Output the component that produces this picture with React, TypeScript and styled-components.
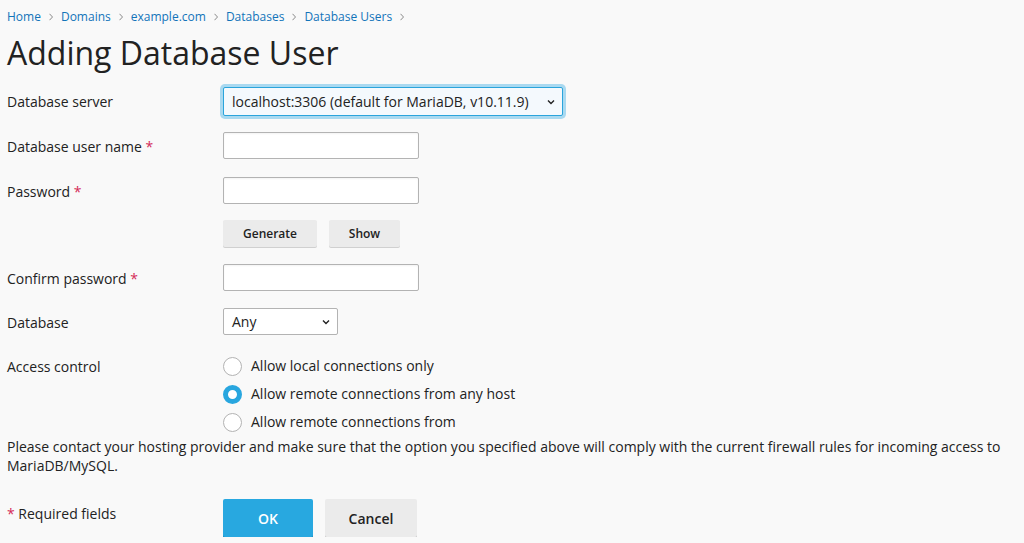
import { Fragment } from "react"
import styled, { createGlobalStyle } from "styled-components"

const GlobalStyle = createGlobalStyle`
  html, body {
    margin: 0;
    padding: 0;
    background: #f9f9f9;
    font-family: "Open Sans", "Liberation Sans", sans-serif;
    color: #222;
  }
  * { box-sizing: border-box; }
`

const Page = styled.div`
  padding: 7px 7px 0;
`

const Crumbs = styled.nav`
  display: flex;
  align-items: center;
  gap: 8px;
  font-size: 12px;
  line-height: 20px;
`

const Crumb = styled.a`
  color: #1274b9;
  text-decoration: none;
`

const Title = styled.h1`
  margin: 4px 0 12px;
  font-size: 32px;
  font-weight: 400;
  line-height: 44px;
  color: #222;
`

const Form = styled.div`
  display: flex;
  flex-direction: column;
`

const Row = styled.div<{ $h?: number }>`
  display: grid;
  grid-template-columns: 216px 1fr;
  align-items: start;
  min-height: ${(p) => p.$h ?? 44}px;
  font-size: 14px;
`

const Label = styled.div`
  line-height: 20px;
  padding-top: 5px;
`

const Req = styled.span`
  color: #d42b58;
`

const Field = styled.div`
  display: flex;
  flex-direction: column;
`

const Select = styled.div<{ $w: number; $focus?: boolean }>`
  width: ${(p) => p.$w}px;
  height: ${(p) => (p.$focus ? 29 : 27)}px;
  border: 1px solid ${(p) => (p.$focus ? "#2aa4dc" : "#b3b3b3")};
  border-radius: 2px;
  background: ${(p) => (p.$focus ? "#f4f9fd" : "#fff")};
  box-shadow: ${(p) => (p.$focus ? "0 0 0 3px #a9d9f0" : "none")};
  display: flex;
  align-items: center;
  justify-content: space-between;
  padding: 0 6px 0 8px;
  font-size: 14px;
  color: #222;
`

const Input = styled.div`
  width: 196px;
  height: 27px;
  border: 1px solid #b3b3b3;
  border-radius: 2px;
  background: #fff;
  box-shadow: inset 0 1px 2px rgba(0, 0, 0, 0.05);
`

const BtnRow = styled.div`
  display: flex;
  gap: 12px;
`

const SmallBtn = styled.button<{ $w: number }>`
  width: ${(p) => p.$w}px;
  height: 27px;
  border: none;
  border-radius: 2px;
  background: #ebebeb;
  box-shadow: 0 1px 0 #d0d0d0;
  font-family: inherit;
  font-weight: 600;
  font-size: 12px;
  color: #222;
`

const Radios = styled.div`
  display: flex;
  flex-direction: column;
  gap: 8px;
  padding-top: 4px;
`

const RadioItem = styled.label`
  display: flex;
  align-items: center;
  gap: 9px;
  font-size: 14px;
  line-height: 20px;
`

const Dot = styled.span<{ $on?: boolean }>`
  width: 19px;
  height: 19px;
  border-radius: 50%;
  border: ${(p) => (p.$on ? "5px solid #28a6df" : "1px solid #b3b3b3")};
  background: #fff;
  flex: none;
`

const Note = styled.p`
  margin: 5px 0 0;
  font-size: 14px;
  line-height: 19px;
`

const Footer = styled.div`
  display: grid;
  grid-template-columns: 216px 1fr;
  align-items: start;
  margin-top: 24px;
  font-size: 14px;
`

const FooterLabel = styled.div`
  line-height: 20px;
  padding-top: 5px;
`

const Actions = styled.div`
  display: flex;
  gap: 12px;
`

const BigBtn = styled.button<{ $primary?: boolean; $w: number }>`
  width: ${(p) => p.$w}px;
  height: 38px;
  border: none;
  border-radius: 2px;
  background: ${(p) => (p.$primary ? "#28a8e0" : "#ebebeb")};
  box-shadow: 0 2px 0 ${(p) => (p.$primary ? "#1e87b8" : "#c8c8c8")};
  color: ${(p) => (p.$primary ? "#fff" : "#222")};
  font-family: inherit;
  font-weight: 600;
  font-size: 14px;
`

const Chevron = () => (
  <svg width="10" height="10" viewBox="0 0 10 10">
    <path d="M2 3.5 L5 6.5 L8 3.5" fill="none" stroke="#222" strokeWidth="1.4" />
  </svg>
)

const CrumbSep = () => (
  <svg width="4" height="8" viewBox="0 0 4 8">
    <path d="M0.5 0.8 L3.5 4 L0.5 7.2" fill="none" stroke="#8a8a8a" strokeWidth="1" />
  </svg>
)

const crumbs = ["Home", "Domains", "example.com", "Databases", "Database Users"]

export default function App() {
  return (
    <Page>
      <GlobalStyle />
      <Crumbs>
        {crumbs.map((c) => (
          <Fragment key={c}>
            <Crumb href="#">{c}</Crumb>
            <CrumbSep />
          </Fragment>
        ))}
      </Crumbs>
      <Title>Adding Database User</Title>
      <Form>
        <Row $h={45}>
          <Label>Database server</Label>
          <Field>
            <Select $w={340} $focus>
              <span>localhost:3306 (default for MariaDB, v10.11.9)</span>
              <Chevron />
            </Select>
          </Field>
        </Row>
        <Row $h={45}>
          <Label>
            Database user name <Req>*</Req>
          </Label>
          <Field>
            <Input />
          </Field>
        </Row>
        <Row $h={43}>
          <Label>
            Password <Req>*</Req>
          </Label>
          <Field>
            <Input />
          </Field>
        </Row>
        <Row>
          <div />
          <BtnRow>
            <SmallBtn $w={94}>Generate</SmallBtn>
            <SmallBtn $w={71}>Show</SmallBtn>
          </BtnRow>
        </Row>
        <Row>
          <Label>
            Confirm password <Req>*</Req>
          </Label>
          <Field>
            <Input />
          </Field>
        </Row>
        <Row>
          <Label>Database</Label>
          <Field>
            <Select $w={115}>
              <span>Any</span>
              <Chevron />
            </Select>
          </Field>
        </Row>
        <Row $h={0}>
          <Label>Access control</Label>
          <Radios>
            <RadioItem>
              <Dot />
              Allow local connections only
            </RadioItem>
            <RadioItem>
              <Dot $on />
              Allow remote connections from any host
            </RadioItem>
            <RadioItem>
              <Dot />
              Allow remote connections from
            </RadioItem>
          </Radios>
        </Row>
        <Note>
          Please contact your hosting provider and make sure that the option you specified above will
          comply with the current firewall rules for incoming access to MariaDB/MySQL.
        </Note>
        <Footer>
          <FooterLabel>
            <Req>*</Req> Required fields
          </FooterLabel>
          <Actions>
            <BigBtn $primary $w={90}>
              OK
            </BigBtn>
            <BigBtn $w={92}>Cancel</BigBtn>
          </Actions>
        </Footer>
      </Form>
    </Page>
  )
}
